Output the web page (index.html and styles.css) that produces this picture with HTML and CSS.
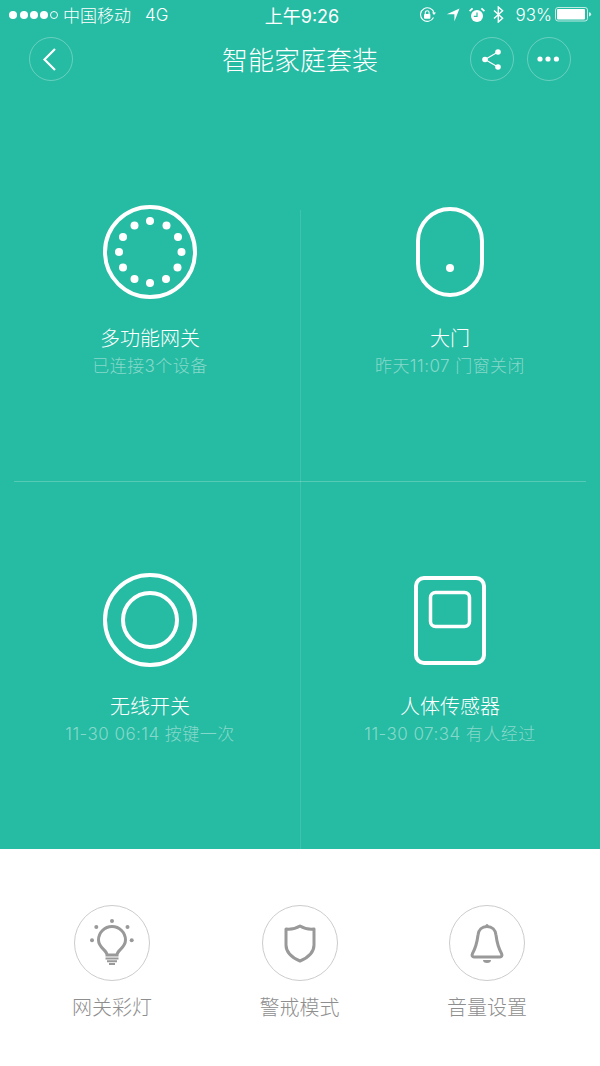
FILE: index.html
```html
<!DOCTYPE html>
<html lang="zh-CN">
<head>
  <meta charset="UTF-8">
  <title>智能家庭套装</title>
  <link rel="stylesheet" href="styles.css">
</head>
<body>
  <div class="top">
    <div class="status">
      <div class="status-left">
        <svg class="signal" width="50" height="10" viewBox="0 0 50 10">
          <circle cx="4" cy="5" r="4" fill="#fff"/>
          <circle cx="15" cy="5" r="4" fill="#fff"/>
          <circle cx="25" cy="5" r="4" fill="#fff"/>
          <circle cx="35" cy="5" r="4" fill="#fff"/>
          <circle cx="45" cy="5" r="3.5" fill="none" stroke="#fff"/>
        </svg>
        <span class="carrier">中国移动</span>
        <span class="net">4G</span>
      </div>
      <div class="status-time">上午9:26</div>
      <div class="status-right">
        <svg width="18" height="16" viewBox="0 0 18 16">
          <path d="M14.5 10.5A6.8 6.8 0 1 1 15 6" fill="none" stroke="#fff" stroke-width="1.1"/>
          <path d="M13 5.5h4l-2 2.4z" fill="#fff"/>
          <rect x="5" y="7" width="6.4" height="4.8" rx=".8" fill="#fff"/>
          <path d="M6.300 7V5.600a1.900 1.900 0 0 1 3.800 0V7" fill="none" stroke="#fff" stroke-width="1.1"/>
        </svg>
        <svg class="loc" width="14" height="14" viewBox="0 0 14 14">
          <path d="M13.500 .5L8.400 13.500V6.200H.8z" fill="#fff"/>
        </svg>
        <svg class="alarm" width="16" height="16" viewBox="0 0 16 16">
          <circle cx="8" cy="9" r="6" fill="#fff"/>
          <path d="M8 5.500V9.400H4.800" fill="none" stroke="#26bba3" stroke-width="1.2"/>
          <path d="M.6 4.200L3.600 1.400M15.400 4.200L12.400 1.400" stroke="#fff" stroke-width="1.8"/>
        </svg>
        <svg class="bt" width="11" height="17" viewBox="0 0 11 17">
          <path d="M1 4.500L9.600 12.200 5.300 16V1l4.300 3.800L1 12.500" fill="none" stroke="#fff" stroke-width="1.4"/>
        </svg>
        <span class="battery-text">93%</span>
        <svg class="battery" width="37" height="15" viewBox="0 0 37 15">
          <rect x=".5" y=".5" width="32" height="13.500" rx="2.500" fill="none" stroke="#fff" stroke-opacity=".7"/>
          <rect x="2" y="2" width="28" height="10.500" rx="1" fill="#fff"/>
          <path d="M34 5.200a2 2 0 0 1 0 4.200z" fill="#fff" fill-opacity=".8"/>
        </svg>
      </div>
    </div>

    <div class="nav">
      <div class="round-btn">
        <svg width="44" height="44" viewBox="0 0 44 44">
          <path d="M26 12L15.500 22.500 26 33" fill="none" stroke="#fff" stroke-width="2.2"/>
        </svg>
      </div>
      <div class="nav-title">智能家庭套装</div>
      <div class="nav-right">
        <div class="round-btn">
          <svg width="44" height="44" viewBox="0 0 44 44">
            <path d="M28 15L15 22.500 28 30" fill="none" stroke="#fff" stroke-width="1.2"/>
            <circle cx="28" cy="15" r="2.800" fill="#fff"/>
            <circle cx="15" cy="22.500" r="2.800" fill="#fff"/>
            <circle cx="28" cy="30" r="2.800" fill="#fff"/>
          </svg>
        </div>
        <div class="round-btn">
          <svg width="44" height="44" viewBox="0 0 44 44">
            <circle cx="13" cy="22" r="2.600" fill="#fff"/>
            <circle cx="21" cy="22" r="2.600" fill="#fff"/>
            <circle cx="29.400" cy="22" r="2.600" fill="#fff"/>
          </svg>
        </div>
      </div>
    </div>

    <div class="devices">
      <div class="device">
        <svg class="device-icon" width="94" height="94" viewBox="0 0 94 94">
          <circle cx="47" cy="47" r="45" fill="none" stroke="#fff" stroke-width="4"/>
          <g fill="#fff">
            <circle cx="47" cy="16" r="4"/>
            <circle cx="63.500" cy="20.500" r="4"/>
            <circle cx="75" cy="32" r="4"/>
            <circle cx="78.500" cy="47" r="4"/>
            <circle cx="74.500" cy="62.500" r="4"/>
            <circle cx="63" cy="74" r="4"/>
            <circle cx="47" cy="78" r="4"/>
            <circle cx="31.500" cy="74" r="4"/>
            <circle cx="20" cy="62.500" r="4"/>
            <circle cx="16" cy="47" r="4"/>
            <circle cx="20" cy="32" r="4"/>
            <circle cx="31.500" cy="20.500" r="4"/>
          </g>
        </svg>
        <div class="device-name">多功能网关</div>
        <div class="device-info">已连接3个设备</div>
      </div>
      <div class="device">
        <svg class="device-icon" width="94" height="94" viewBox="0 0 94 94">
          <rect x="15" y="4" width="64" height="86" rx="32" fill="none" stroke="#fff" stroke-width="4"/>
          <circle cx="47" cy="63" r="4" fill="#fff"/>
        </svg>
        <div class="device-name">大门</div>
        <div class="device-info">昨天11:07 门窗关闭</div>
      </div>
      <div class="device">
        <svg class="device-icon" width="94" height="94" viewBox="0 0 94 94">
          <circle cx="47" cy="47" r="45" fill="none" stroke="#fff" stroke-width="4"/>
          <circle cx="47" cy="47" r="27" fill="none" stroke="#fff" stroke-width="4"/>
        </svg>
        <div class="device-name">无线开关</div>
        <div class="device-info">11-30 06:14 按键一次</div>
      </div>
      <div class="device">
        <svg class="device-icon" width="94" height="94" viewBox="0 0 94 94">
          <rect x="13" y="5" width="68" height="85" rx="8" fill="none" stroke="#fff" stroke-width="4"/>
          <rect x="27.500" y="19.500" width="39" height="34" rx="5" fill="none" stroke="#fff" stroke-width="3.500"/>
        </svg>
        <div class="device-name">人体传感器</div>
        <div class="device-info">11-30 07:34 有人经过</div>
      </div>
    </div>
  </div>

  <div class="actions">
    <div class="action">
      <div class="action-circle">
        <svg width="76" height="76" viewBox="0 0 76 76">
          <path d="M33 50C33 45 24.500 43 24.500 35A13.500 13.500 0 0 1 51.500 35C51.500 43 43 45 43 50Z" fill="none" stroke="#999" stroke-width="3"/>
          <path d="M31.500 53.500H44.500M33 56.300H43M35 59H41" fill="none" stroke="#999" stroke-width="2"/>
          <g fill="#999">
            <circle cx="38" cy="16" r="2"/>
            <circle cx="22.300" cy="22" r="2"/>
            <circle cx="53.500" cy="22" r="2"/>
            <circle cx="18" cy="35.300" r="2"/>
            <circle cx="57.700" cy="35.300" r="2"/>
          </g>
        </svg>
      </div>
      <div class="action-label">网关彩灯</div>
    </div>
    <div class="action">
      <div class="action-circle">
        <svg width="76" height="76" viewBox="0 0 76 76">
          <path d="M38 21C42 23.500 47 24.500 52 24V40C52 48 45 53 38 56C31 53 24 48 24 40V24C29 24.500 34 23.500 38 21Z" fill="none" stroke="#999" stroke-width="3" stroke-linejoin="round"/>
        </svg>
      </div>
      <div class="action-label">警戒模式</div>
    </div>
    <div class="action">
      <div class="action-circle">
        <svg width="76" height="76" viewBox="0 0 76 76">
          <path d="M38 21.500C43 21.500 46.500 25 47 30C48 38 50 44 52.500 48.500C53.500 50.500 52.500 52 51 52H25C23.500 52 22.500 50.500 23.500 48.500C26 44 28 38 29 30C29.500 25 33 21.500 38 21.500Z" fill="none" stroke="#999" stroke-width="3" stroke-linejoin="round"/>
          <path d="M34 55A4 3 0 0 0 42 55Z" fill="#999"/>
          <circle cx="38" cy="20.500" r="1.500" fill="#999"/>
        </svg>
      </div>
      <div class="action-label">音量设置</div>
    </div>
  </div>
</body>
</html>
```

FILE: styles.css
```css
body {
  margin: 0;
  width: 600px;
  height: 1066px;
  overflow: hidden;
  font-family: Inter, 'Noto Sans CJK SC', sans-serif;
  background: #fff;
}
.top {
  height: 849px;
  background: #26bba3;
  color: #fff;
}
.status {
  display: grid;
  grid-template-columns: 1fr auto 1fr;
  align-items: center;
  height: 29px;
  padding: 0 8px 1px 9px;
  font-size: 17px;
  font-weight: 300;
}
.status-left,
.status-right {
  display: flex;
  align-items: center;
}
.status-right {
  justify-content: flex-end;
}
.status-time {
  font-size: 18px;
  font-weight: 400;
  margin-left: 3px;
}
.signal {
  margin-right: 4px;
}
.net {
  margin-left: 14px;
}
.loc {
  margin-left: 9px;
}
.alarm {
  margin-left: 9px;
}
.bt {
  margin-left: 8px;
}
.battery-text {
  margin-left: 12px;
}
.battery {
  margin-left: 3px;
}
.nav {
  display: grid;
  grid-template-columns: 1fr auto 1fr;
  align-items: center;
  height: 44px;
  margin-top: 7px;
  padding: 0 29px;
}
.nav-title {
  height: 44px;
  font-size: 26px;
  font-weight: 300;
  line-height: 47px;
}
.nav-right {
  display: flex;
  justify-content: flex-end;
  gap: 13px;
}
.round-btn {
  width: 44px;
  height: 44px;
  box-sizing: border-box;
  border: 1px solid rgba(255,255,255,0.3);
  border-radius: 50%;
  overflow: hidden;
}
.round-btn svg {
  display: block;
  margin: -1px;
}
.devices {
  position: relative;
  display: grid;
  grid-template-columns: 1fr 1fr;
  grid-auto-rows: 368px;
  margin-top: 32px;
}
/* the two hair lines between the cells */
.devices::before {
  content: "";
  position: absolute;
  left: 300px;
  top: 97px;
  bottom: 0;
  width: 1px;
  background: rgba(255,255,255,0.12);
}
.devices::after {
  content: "";
  position: absolute;
  left: 14px;
  right: 14px;
  top: 368px;
  height: 1px;
  background: rgba(255,255,255,0.22);
}
.device {
  display: flex;
  flex-direction: column;
  align-items: center;
  padding-top: 92px;
}
.device-icon {
  display: block;
}
.device-name {
  margin-top: 25px;
  font-size: 20px;
  font-weight: 300;
  line-height: 30px;
}
.device-info {
  font-size: 17px;
  font-weight: 300;
  line-height: 24px;
  letter-spacing: 0.45px;
  color: rgba(255,255,255,0.45);
}
.actions {
  display: grid;
  grid-template-columns: repeat(3, 187.5px);
  padding: 56px 0 0 18.25px;
}
.action {
  display: flex;
  flex-direction: column;
  align-items: center;
}
.action-circle {
  width: 76px;
  height: 76px;
  box-sizing: border-box;
  border: 1px solid #ccc;
  border-radius: 50%;
}
.action-circle svg {
  display: block;
  margin: -1px;
}
.action-label {
  margin-top: 12px;
  font-size: 20px;
  font-weight: 300;
  line-height: 30px;
  color: #8e8e8e;
}
```
